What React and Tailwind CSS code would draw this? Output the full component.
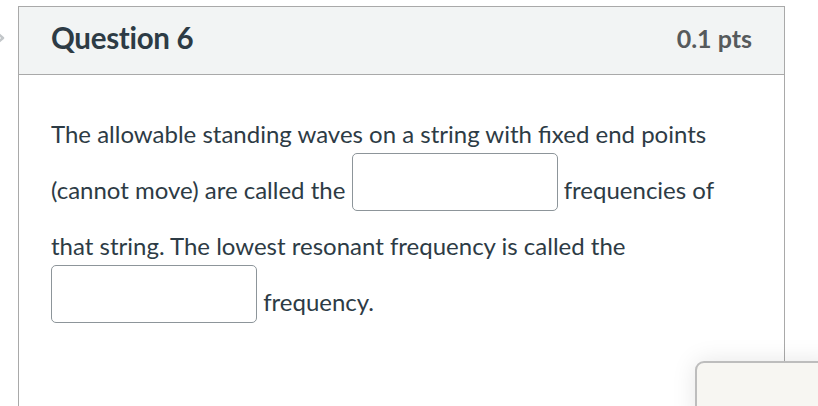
export default function App() {
  return (
    <div
      className="relative w-[818px] h-[406px] overflow-hidden bg-white"
      style={{ fontFamily: "Lato, 'Noto Sans', sans-serif" }}
    >
      {/* left nav chevron, mostly off screen */}
      <svg
        className="absolute left-[-10px] top-[29px]"
        width="16"
        height="18"
        viewBox="0 0 16 18"
        fill="none"
      >
        <path d="M5 2l8 7-8 7" stroke="#c3c7ca" strokeWidth="2.5" strokeLinejoin="round" />
      </svg>

      <div className="ml-[18px] mt-[6px] w-[767px] h-[420px] border border-[#a9a9a9] flex flex-col">
        <div className="h-[68px] shrink-0 bg-[#f2f4f4] border-b border-[#a9a9a9] px-[32px] pb-[5px] flex items-center justify-between">
          <h2 className="text-[29.5px] font-bold text-[#2d3b45] tracking-[-0.3px]">Question 6</h2>
          <span className="text-[25px] font-bold text-[#565a5c] pt-[1px]">0.1 pts</span>
        </div>
        <div className="px-[32px] pt-[31px]">
          <p className="text-[24px] leading-[56px] text-[#2d3b45]">
            The allowable standing waves on a string with fixed end points (cannot move) are called the{" "}
            <input
              type="text"
              aria-label="blank 1"
              className="inline-block w-[206px] h-[58px] -my-[12px] align-[8px] border border-[#8d959a] rounded-[5px] bg-white px-2 outline-none"
            />{" "}
            frequencies of that string. The lowest resonant frequency is called the{" "}
            <input
              type="text"
              aria-label="blank 2"
              className="inline-block w-[206px] h-[58px] -my-[12px] align-[8px] border border-[#8d959a] rounded-[5px] bg-white px-2 outline-none"
            />{" "}
            frequency.
          </p>
        </div>
      </div>

      {/* floating panel in the corner */}
      <div className="absolute left-[695px] top-[361px] w-[140px] h-[60px] rounded-tl-[9px] border-2 border-[#bdbdbd] bg-[#f7f6f2] shadow-[0_0_24px_rgba(0,0,0,0.10)]" />
    </div>
  );
}
